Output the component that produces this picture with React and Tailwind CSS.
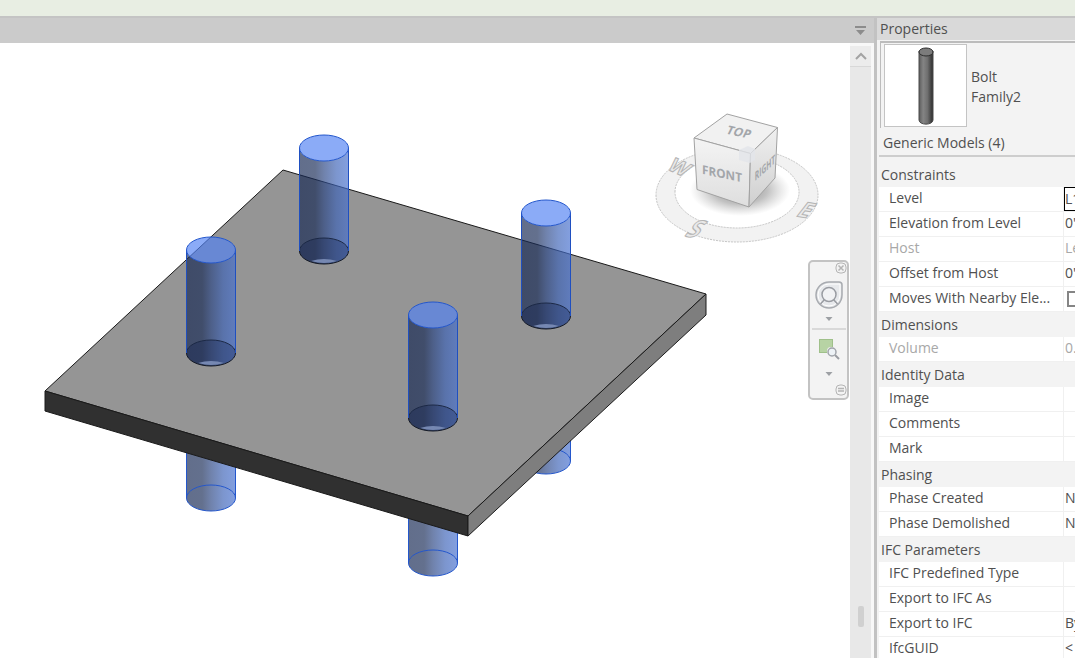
import React, { useState } from 'react';

const GROUPS = [
  {
    title: 'Constraints',
    rows: [
      { label: 'Level', value: 'L1', type: 'input' },
      { label: 'Elevation from Level', value: "0'" },
      { label: 'Host', value: 'Le', disabled: true },
      { label: 'Offset from Host', value: "0'" },
      { label: 'Moves With Nearby Ele...', type: 'checkbox' },
    ],
  },
  { title: 'Dimensions', rows: [{ label: 'Volume', value: '0.', disabled: true }] },
  {
    title: 'Identity Data',
    rows: [{ label: 'Image' }, { label: 'Comments' }, { label: 'Mark' }],
  },
  {
    title: 'Phasing',
    rows: [
      { label: 'Phase Created', value: 'N' },
      { label: 'Phase Demolished', value: 'N' },
    ],
  },
  {
    title: 'IFC Parameters',
    rows: [
      { label: 'IFC Predefined Type' },
      { label: 'Export to IFC As' },
      { label: 'Export to IFC', value: 'By' },
      { label: 'IfcGUID', value: '<' },
    ],
  },
];

// x and y are the centre of the top cap
const BOLTS = [
  { x: 324, y: 148 },
  { x: 546, y: 213 },
  { x: 211, y: 250 },
  { x: 433, y: 315 },
];

const BoltLower = ({ x, y }) => {
  const end = y + 248;
  return (
    <g stroke="#2457cc">
      <path
        d={`M${x - 24.5} ${y + 130}V${end}A24.5 13 0 0 0 ${x + 24.5} ${end}V${y + 130}`}
        fill="url(#boltSide)"
      />
      <path d={`M${x - 24.5} ${end}A24.5 13 0 0 1 ${x + 24.5} ${end}`} fill="none" />
    </g>
  );
};

const BoltUpper = ({ x, y }) => {
  const hole = y + 103;
  return (
    <g>
      <path
        d={`M${x - 24.5} ${y}V${hole}A24.5 13 0 0 0 ${x + 24.5} ${hole}V${y}A24.5 13 0 0 1 ${x - 24.5} ${y}Z`}
        fill="url(#boltSide)"
      />
      <ellipse cx={x} cy={hole} rx="24.5" ry="13" fill="#0a1a48" fillOpacity=".32" />
      <path d={`M${x - 13} ${hole + 10}Q${x} ${hole + 6} ${x + 13} ${hole + 10}Q${x} ${hole + 14} ${x - 13} ${hole + 10}Z`} fill="#7688b2" />
      <path d={`M${x - 24.5} ${hole}A24.5 13 0 0 1 ${x + 24.5} ${hole}`} fill="none" stroke="#1c2946" />
      <path d={`M${x - 24.5} ${hole}A24.5 13 0 0 0 ${x + 24.5} ${hole}`} fill="none" stroke="#151a25" />
      <path d={`M${x - 24.5} ${y}V${hole}M${x + 24.5} ${y}V${hole}`} stroke="#1f4fc0" />
      <ellipse cx={x} cy={y} rx="24.5" ry="13" fill="#5281f3" fillOpacity=".67" stroke="#2457cc" />
    </g>
  );
};

const Model = () => (
  <svg viewBox="0 0 850 615" className="block h-full w-full" role="img" aria-label="Plate with four bolts">
    <defs>
      <linearGradient id="boltSide">
        <stop offset="0" stopColor="#152752" stopOpacity=".67" />
        <stop offset=".32" stopColor="#172a56" stopOpacity=".67" />
        <stop offset=".5" stopColor="#2a4583" stopOpacity=".67" />
        <stop offset=".75" stopColor="#3c62b6" stopOpacity=".67" />
        <stop offset="1" stopColor="#4670d0" stopOpacity=".67" />
      </linearGradient>
    </defs>
    <g transform="translate(0 -43)">
      {BOLTS.map((bolt) => (
        <BoltLower key={bolt.x} {...bolt} />
      ))}
      <g stroke="#1a1a1a" strokeLinejoin="round">
        <path d="M45 391L283 170L706 294L468 516Z" fill="#959595" />
        <path d="M45 391L468 516V536L45 411Z" fill="#303030" />
        <path d="M468 516L706 294V315L468 536Z" fill="#7e7e7e" />
      </g>
      {BOLTS.map((bolt) => (
        <BoltUpper key={bolt.x} {...bolt} />
      ))}
    </g>
  </svg>
);

const ViewCube = () => (
  <svg viewBox="650 105 175 145" width="175" height="145" role="img" aria-label="View cube">
    <defs>
      <linearGradient id="cubeFront" x1="0" y1="0" x2="0" y2="1">
        <stop offset="0" stopColor="#f4f4f4" />
        <stop offset="1" stopColor="#dedede" />
      </linearGradient>
      <linearGradient id="cubeRight" x1="0" y1="0" x2="0" y2="1">
        <stop offset="0" stopColor="#f0f0f0" />
        <stop offset="1" stopColor="#cfcfcf" />
      </linearGradient>
      <radialGradient id="cubeShadow">
        <stop offset="0" stopColor="#555" stopOpacity=".75" />
        <stop offset=".55" stopColor="#777" stopOpacity=".45" />
        <stop offset="1" stopColor="#999" stopOpacity="0" />
      </radialGradient>
    </defs>
    <path
      d="M656 195A81 47 0 1 0 818 195A81 47 0 1 0 656 195ZM675 192A62 36 0 1 1 799 192A62 36 0 1 1 675 192Z"
      fill="#f2f2f2"
      fillRule="evenodd"
      stroke="#c4c4c4"
      strokeDasharray="2 1"
    />
    <ellipse cx="740" cy="190" rx="50" ry="26" fill="url(#cubeShadow)" />
    <g stroke="#a2a2a2" strokeLinejoin="round">
      <path d="M694 138L727 114L777.5 127.500L750.5 153.500Z" fill="#f1f1f1" />
      <path d="M694 138L750.5 153.500L749 207L697 189.500Z" fill="url(#cubeFront)" />
      <path d="M750.500 153.500L777.500 127.500L775 178L749 207Z" fill="url(#cubeRight)" />
    </g>
    <path d="M739 150L748 146L755 149V160L750 163L739 160Z" fill="#e2e5ea" fillOpacity=".8" />
    <g fontFamily="Open Sans, sans-serif" fontWeight="700" fill="#a3a6aa" textAnchor="middle">
      <text fontSize="12" transform="translate(737 136) rotate(12) skewX(-14)">TOP</text>
      <text fontSize="12" transform="translate(722 178) rotate(12) skewX(12)">FRONT</text>
      <text fontSize="9" transform="translate(765 172) rotate(-42) skewX(-42)">RIGHT</text>
    </g>
    <g
      fontFamily="Open Sans, sans-serif"
      fontWeight="700"
      fill="#e9e9e9"
      stroke="#b4b4b4"
      textAnchor="middle"
    >
      <text fontSize="20" transform="translate(675 173) rotate(24) skewX(-16)">W</text>
      <text fontSize="24" transform="translate(690 237) rotate(4) skewX(-34)">S</text>
      <text fontSize="22" transform="translate(801 217) rotate(10) skewX(-28)">E</text>
    </g>
  </svg>
);

const SmallArrow = () => (
  <svg width="8" height="4" viewBox="0 0 8 4" aria-hidden="true">
    <path d="M0.500 0H7.500L4 4Z" fill="#9da0a4" />
  </svg>
);

const NavigationBar = () => (
  <div className="flex w-[41px] flex-col items-center rounded-[5px] border-2 border-[#c3c3c3] bg-[#f3f3f3] text-[#b4b4b4]">
    <button aria-label="Close" className="self-end">
      <svg width="12" height="12" viewBox="0 0 12 12" fill="none" stroke="currentColor" className="block">
        <rect x="1" y="1" width="10" height="10" rx="4" />
        <path d="M3.500 3.500L8.500 8.500M8.500 3.500L3.500 8.500" strokeWidth="1.500" />
      </svg>
    </button>
    <button aria-label="Steering wheel" className="mt-1.5">
      <svg width="30" height="30" viewBox="0 0 30 30" fill="none" className="block">
        <path d="M15 2H25Q28 2 28 5V15A13 13 0 1 1 15 2Z" fill="#e2e4e6" stroke="#a8abb0" strokeWidth="1.500" />
        <path d="M15 4H26V15A11 11 0 1 1 15 4Z" fill="#e7e9ec" stroke="#fff" />
        <path d="M6.500 24L10.500 19.500M23.500 24L19.500 19.500" stroke="#999ca2" strokeWidth="1.500" />
        <circle cx="15" cy="14.500" r="7" fill="#f1f2f4" stroke="#999ca2" strokeWidth="1.500" />
      </svg>
    </button>
    <button aria-label="Steering wheel options" className="flex h-[18px] w-full items-center justify-center">
      <SmallArrow />
    </button>
    <div className="h-0.5 w-[34px] bg-[#d9d9d9]" />
    <button aria-label="Zoom in region" className="mt-2">
      <svg width="22" height="22" viewBox="0 0 22 22" fill="none" className="block">
        <rect x="1.500" y="1.500" width="13" height="13" fill="#b7d3a4" stroke="#9fc08a" />
        <rect x="9" y="9" width="10" height="10" rx="4" fill="#f3f3f3" />
        <path d="M17 17L21 21" stroke="#999ca2" strokeWidth="2" />
        <circle cx="14" cy="14" r="4" fill="#edf2f6" stroke="#a0a4aa" strokeWidth="1.500" />
      </svg>
    </button>
    <button aria-label="Zoom options" className="mt-1 flex h-5 w-full items-center justify-center">
      <SmallArrow />
    </button>
    <button aria-label="Customize" className="mb-0.5 self-end">
      <svg width="12" height="12" viewBox="0 0 12 12" fill="none" stroke="currentColor" className="block">
        <rect x="1" y="1" width="10" height="10" rx="4" />
        <path d="M3 4.500H9M3 7H9" strokeWidth="1.500" />
      </svg>
    </button>
  </div>
);

const Viewport = () => (
  <main className="flex min-w-0 flex-1 flex-col">
    <div className="flex h-[25px] shrink-0 items-center justify-end bg-[#cbcbcb] pr-2">
      <button aria-label="Open views">
        <svg width="11" height="9" viewBox="0 0 11 9" className="block">
          <path d="M0 0H11V2H0ZM1 4H10L5.500 9Z" fill="#8c8c8c" />
        </svg>
      </button>
    </div>
    <div className="flex min-h-0 flex-1">
      <div className="relative min-w-0 flex-1 bg-white">
        <Model />
        <div className="absolute right-[25px] top-[62px]">
          <ViewCube />
        </div>
        <div className="absolute right-px top-[217px]">
          <NavigationBar />
        </div>
      </div>
      <div className="mr-[3px] mt-[3px] flex w-[21px] flex-col items-center bg-[#e8e8e8]">
        <button aria-label="Scroll up" className="flex h-[21px] w-full items-center justify-center border-b border-[#d8d8d8] bg-[#ececec]">
          <svg width="12" height="8" viewBox="0 0 12 8" fill="none" stroke="#a3a3a3" strokeWidth="2">
            <path d="M1 7L6 2L11 7" />
          </svg>
        </button>
        <div className="mt-auto mb-[31px] h-[21px] w-1.5 rounded-xs bg-[#d0d0d0]" />
      </div>
    </div>
  </main>
);

const BoltPreview = () => (
  <svg width="16" height="78" viewBox="0 0 16 78" role="img" aria-label="Bolt">
    <defs>
      <linearGradient id="steel">
        <stop offset="0" stopColor="#5c5c5c" />
        <stop offset=".3" stopColor="#848484" />
        <stop offset=".6" stopColor="#707070" />
        <stop offset="1" stopColor="#2c2c2c" />
      </linearGradient>
    </defs>
    <path d="M1 4V73C1 78.500 15 78.500 15 73V4Z" fill="url(#steel)" stroke="#4b4b4b" />
    <ellipse cx="8" cy="5" rx="7" ry="4" fill="#7c7c7c" stroke="#2e2e2e" />
  </svg>
);

const PropertyValue = ({ row }) => {
  const [checked, setChecked] = useState(false);
  const [text, setText] = useState(row.value || '');

  if (row.type === 'checkbox') {
    return (
      <input
        type="checkbox"
        aria-label={row.label}
        checked={checked}
        onChange={(e) => setChecked(e.target.checked)}
        className="ml-[3px] block size-4 appearance-none border-2 border-[#858585] bg-white checked:bg-[#858585]"
      />
    );
  }

  if (row.type === 'input') {
    return (
      <input
        aria-label={row.label}
        value={text}
        onChange={(e) => setText(e.target.value)}
        className="block h-6 w-full border border-black bg-white pb-0.5 outline-none"
      />
    );
  }

  return <span className="block whitespace-nowrap pb-0.5 pl-px">{row.value}</span>;
};

const PropertyRow = ({ row }) => (
  <tr className={row.disabled ? 'h-[25px] text-[#a8a8a8]' : 'h-[25px]'}>
    <th
      scope="row"
      className="whitespace-nowrap border-b border-r border-[#f0f0f0] bg-white p-0 pb-0.5 pl-2.5 text-left font-normal"
    >
      {row.label}
    </th>
    <td className="border-b border-[#f0f0f0] bg-white p-0">
      <PropertyValue row={row} />
    </td>
  </tr>
);

const PropertiesPanel = () => (
  <aside className="flex w-[201px] shrink-0 flex-col overflow-hidden border-l-3 border-[#c2c2c2] bg-[#f3f3f3]">
    <h2 className="h-[22px] shrink-0 bg-[#d9d9d9] pl-[3px] leading-[22px]">Properties</h2>
    <div className="ml-[3px] mt-px flex h-[87px] shrink-0 border-l border-t-2 border-[#bcbcbc]">
      <div className="ml-[3px] mt-px flex h-[83px] w-[83px] items-center justify-center border border-[#c4c4c4] bg-white">
        <BoltPreview />
      </div>
      <div className="ml-1 self-center pt-0.5 leading-5">
        <p>Bolt</p>
        <p>Family2</p>
      </div>
    </div>
    <div className="ml-0.5 h-[29px] shrink-0 border-b-2 border-[#cdcdcd] pl-1 leading-[30px]">Generic Models (4)</div>
    <table className="ml-0.5 mt-[5px] w-full table-fixed border-separate border-spacing-0 leading-5">
      <colgroup>
        <col className="w-[185px]" />
        <col />
      </colgroup>
      {GROUPS.map((group) => (
        <tbody key={group.title}>
          <tr className="h-[25px]">
            <th colSpan="2" scope="colgroup" className="whitespace-nowrap p-0 pl-0.5 text-left font-normal">
              {group.title}
            </th>
          </tr>
          {group.rows.map((row) => (
            <PropertyRow key={row.label} row={row} />
          ))}
        </tbody>
      ))}
    </table>
  </aside>
);

const App = () => (
  <div className="flex h-screen flex-col overflow-hidden bg-[#f8f8f8] font-['Open_Sans',sans-serif] text-[14px] text-[#505050]">
    <header className="h-[18px] shrink-0 border-b-2 border-[#c4c4c4] bg-[#e8eee3]" />
    <div className="flex min-h-0 flex-1">
      <Viewport />
      <PropertiesPanel />
    </div>
  </div>
);

export default App;
